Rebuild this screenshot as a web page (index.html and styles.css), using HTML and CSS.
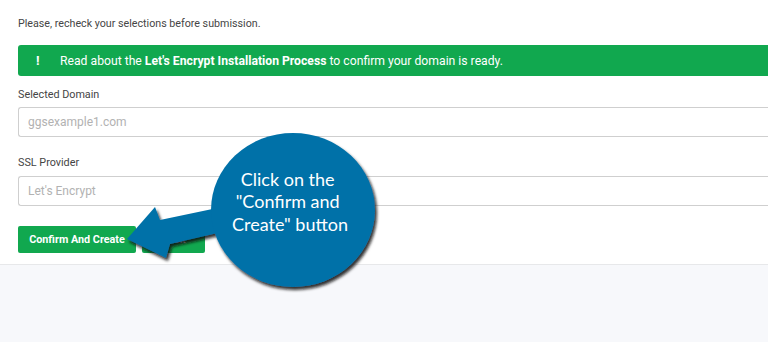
FILE: index.html
```html
<!DOCTYPE html>
<html>
  <head>
    <meta charset="UTF-8" />
    <title>SSL Certificate - Confirm</title>
    <link rel="stylesheet" href="styles.css">
  </head>
  <body>
    <div class="page">
      <div class="panel">
        <p class="intro">Please, recheck your selections before submission.</p>

        <div class="alert">
          <span class="alert-icon">!</span>
          <span class="alert-text">
            Read about the <strong>Let's Encrypt Installation Process</strong>
            to confirm your domain is ready.
          </span>
        </div>

        <div class="field">
          <label class="field-label">Selected Domain</label>
          <input type="text" class="field-input" placeholder="ggsexample1.com" />
        </div>

        <div class="field field-ssl">
          <label class="field-label">SSL Provider</label>
          <input type="text" class="field-input" placeholder="Let's Encrypt" />
        </div>

        <div class="actions">
          <button class="button confirm-button">Confirm And Create</button>
          <button class="button back-button">Back</button>
        </div>
      </div>

      <div class="page-bottom"></div>
    </div>

    <!-- tutorial callout drawn over the form -->
    <svg
      class="callout"
      width="768"
      height="342"
      viewBox="0 0 768 342"
      xmlns="http://www.w3.org/2000/svg"
    >
      <defs>
        <filter id="shade" x="-20%" y="-20%" width="140%" height="140%">
          <feDropShadow dx="2" dy="3" stdDeviation="1.4" flood-color="#111" flood-opacity="0.85" />
        </filter>
      </defs>
      <g filter="url(#shade)" fill="#0671a8">
        <polygon points="127,239 155,207 160,220 222,207 226,231 170,244 166,258" />
        <ellipse cx="293" cy="210" rx="82" ry="77" />
      </g>
      <text class="callout-text" x="290" text-anchor="middle">
        <tspan x="290" y="186">Click on the</tspan>
        <tspan x="290" y="208">"Confirm and</tspan>
        <tspan x="290" y="231">Create" button</tspan>
      </text>
    </svg>
  </body>
</html>
```

FILE: styles.css
```css
:root {
  --green: #11a84f;
  --text-primary: #3c3c3c;
  --text-muted: #b2b2b2;
  --border-color: #cfcfcf;
  --bg-bottom: #f7f8fb;
}

* {
  margin: 0;
  padding: 0;
  box-sizing: border-box;
}

body {
  font-family: Roboto, "Liberation Sans", Arial, sans-serif;
  background-color: #ffffff;
  color: var(--text-primary);
  width: 768px;
  height: 342px;
  overflow: hidden;
  position: relative;
}

.page {
  display: flex;
  flex-direction: column;
  height: 100%;
}

.panel {
  width: 800px;
  padding: 16px 0 11px 18px;
  border-bottom: 1px solid #e7e8ea;
  background-color: #ffffff;
}

.intro {
  font-size: 10.7px;
  line-height: 16px;
  color: #454545;
  margin-bottom: 13px;
}

.alert {
  display: flex;
  align-items: center;
  height: 31px;
  background-color: var(--green);
  color: #ffffff;
  border-radius: 3px 0 0 3px;
  font-size: 12.2px;
}

.alert-icon {
  font-weight: 700;
  font-size: 13px;
  width: 42px;
  padding-left: 18px;
}

.alert-text strong {
  font-weight: 700;
}

.field {
  display: flex;
  flex-direction: column;
  margin-top: 11px;
}

.field-ssl {
  margin-top: 18px;
}

.field-label {
  font-size: 10.8px;
  line-height: 16px;
  color: #444444;
  margin-bottom: 4px;
}

.field-ssl .field-label {
  margin-bottom: 5px;
}

.field-input {
  height: 30px;
  width: 100%;
  border: 1px solid var(--border-color);
  border-right: none;
  border-radius: 3px 0 0 3px;
  padding: 0 9px;
  font-family: Roboto, "Liberation Sans", Arial, sans-serif;
  font-size: 12px;
  color: var(--text-primary);
  background-color: #ffffff;
}

.field-input::placeholder {
  color: var(--text-muted);
}

.actions {
  display: flex;
  gap: 6px;
  margin-top: 20px;
}

.button {
  height: 27px;
  border: none;
  border-radius: 2px;
  background-color: var(--green);
  color: #ffffff;
  font-family: Roboto, "Liberation Sans", Arial, sans-serif;
  font-size: 10.8px;
  font-weight: 700;
  cursor: pointer;
}

.confirm-button {
  width: 118px;
}

.back-button {
  width: 63px;
}

.page-bottom {
  flex: 1;
  background-color: var(--bg-bottom);
}

.callout {
  position: absolute;
  left: 0;
  top: 0;
  pointer-events: none;
}

.callout-text {
  font-family: Lato, "Open Sans", sans-serif;
  font-size: 18px;
  fill: #ffffff;
}
```
